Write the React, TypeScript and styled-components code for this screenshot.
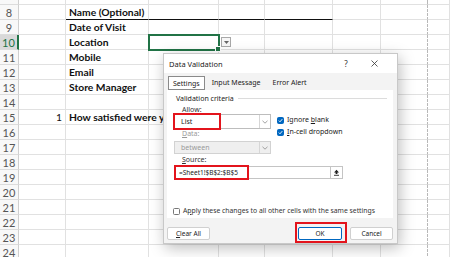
import React from 'react'
import styled, { createGlobalStyle } from 'styled-components'

const GlobalStyle = createGlobalStyle`
    body {
        margin: 0;
        background: #fff;
        overflow: hidden;
    }
`

const COLS = '19px 47px 83px 70px 46px 68px 48px 47px 1fr'

const SheetStyle = styled.div`
    position: relative;
    width: 450px;
    height: 257px;
    overflow: hidden;
    font-family: Lato, "Liberation Sans", sans-serif;
`

const RowStyle = styled.div<{ $h: number }>`
    display: grid;
    grid-template-columns: ${COLS};
    height: ${p => p.$h}px;
`

const HeadCell = styled.div<{ $active?: boolean }>`
    box-sizing: border-box;
    display: flex;
    align-items: center;
    justify-content: center;
    background: ${p => (p.$active ? '#d9d9d9' : '#f8f8f8')};
    color: ${p => (p.$active ? '#217346' : '#555')};
    border-right: ${p => (p.$active ? '2px solid #217346' : '1px solid #cfcfcf')};
    border-bottom: 1px solid #dcdcdc;
    font-size: 11px;
`

const Cell = styled.div<{ $under?: boolean; $dashed?: boolean; $right?: boolean }>`
    position: relative;
    box-sizing: border-box;
    display: flex;
    align-items: center;
    justify-content: ${p => (p.$right ? 'flex-end' : 'flex-start')};
    padding: 0 3px;
    border-right: 1px ${p => (p.$dashed ? 'dashed #b8b8b8' : 'solid #e1e1e1')};
    border-bottom: ${p => (p.$under ? '1.5px solid #111' : '1px solid #e1e1e1')};
    font-size: 10.3px;
    font-weight: bold;
    color: #111;
    white-space: nowrap;
`

const PlainCell = styled(Cell)`
    font-weight: normal;
`

const SelectedCell = styled(Cell)`
    outline: 2px solid #217346;
    outline-offset: -1px;
    z-index: 1;
    &::after {
        content: "";
        position: absolute;
        right: -3px;
        bottom: -3px;
        width: 4px;
        height: 4px;
        background: #217346;
        border: 1px solid #fff;
    }
`

const CellDrop = styled.span`
    box-sizing: border-box;
    width: 10px;
    height: 10px;
    margin-left: -1px;
    border: 1px solid #a8a8a8;
    background: #f6f6f6;
    display: flex;
    align-items: center;
    justify-content: center;
`

/* dialog */

const DialogStyle = styled.div`
    position: absolute;
    left: 163px;
    top: 53px;
    width: 235px;
    height: 191px;
    box-sizing: border-box;
    display: flex;
    flex-direction: column;
    background: #f3f3f3;
    border: 1px solid #c8c8c8;
    box-shadow: 2px 4px 14px rgba(0, 0, 0, 0.26);
    font-family: "Noto Sans", "Open Sans", sans-serif;
    font-size: 7px;
    color: #1a1a1a;
    z-index: 5;
`

const TitleBar = styled.div`
    display: flex;
    align-items: center;
    height: 19px;
    padding: 0 9px 0 5px;
    background: #fff;
    font-size: 7.5px;
`

const TitleText = styled.span`
    flex: 1;
`

const TitleBtn = styled.span`
    width: 28px;
    text-align: center;
    font-size: 8px;
    color: #333;
`

const TabRow = styled.div`
    display: flex;
    align-items: flex-end;
    gap: 2px;
    height: 17px;
    padding: 0 4px;
`

const Tab = styled.span<{ $active?: boolean }>`
    padding: 2px 4px 1px;
    margin-bottom: ${p => (p.$active ? '0' : '1px')};
    line-height: 9px;
    border: 1px solid ${p => (p.$active ? '#8a8a8a' : 'transparent')};
    background: ${p => (p.$active ? '#fff' : 'transparent')};
    font-size: 7px;
`

const Panel = styled.div`
    display: flex;
    flex-direction: column;
    height: 128px;
    margin: 0 4px 0 3px;
    padding: 4px 6px 0 6px;
    background: #fff;
    box-sizing: border-box;
`

const Group = styled.div`
    display: flex;
    align-items: center;
    gap: 4px;
    padding-left: 3px;
    line-height: 9px;
    color: #222;
    &::after {
        content: "";
        flex: 1;
        height: 1px;
        background: #dcdcdc;
    }
`

const FieldLabel = styled.div<{ $disabled?: boolean; $gap: number }>`
    margin: ${p => p.$gap}px 0 0 9px;
    line-height: 8px;
    color: ${p => (p.$disabled ? '#9a9a9a' : '#333')};
`

const U = styled.span`
    text-decoration: underline;
`

const AllowRow = styled.div`
    display: flex;
    align-items: flex-start;
    gap: 6px;
    height: 15px;
`

const SelectBox = styled.div<{ $disabled?: boolean; $h: number }>`
    position: relative;
    flex: none;
    box-sizing: border-box;
    width: 97px;
    height: ${p => p.$h}px;
    margin: ${p => (p.$disabled ? '3px' : '0')} 0 0 1px;
    display: flex;
    align-items: center;
    padding-left: 6px;
    border: 1px solid ${p => (p.$disabled ? '#d2d2d2' : '#bdbdbd')};
    background: ${p => (p.$disabled ? '#efefef' : '#fff')};
    color: ${p => (p.$disabled ? '#9a9a9a' : '#222')};
`

const Chevron = styled.span`
    position: absolute;
    right: 0;
    top: 0;
    bottom: 0;
    width: 10px;
    border-left: 1px solid #d6d6d6;
    display: flex;
    align-items: center;
    justify-content: center;
`

const RedMark = styled.span<{ $w: number }>`
    position: absolute;
    left: -2px;
    top: -2px;
    bottom: -2px;
    width: ${p => p.$w}px;
    border: 2.5px solid #e3141c;
    box-sizing: border-box;
`

const CheckList = styled.div`
    display: flex;
    flex-direction: column;
    gap: 4px;
    margin-top: 2px;
`

const CheckRow = styled.label`
    display: flex;
    align-items: center;
    gap: 3px;
    line-height: 8px;
    white-space: nowrap;
`

const Box = styled.span<{ $on?: boolean }>`
    box-sizing: border-box;
    flex: none;
    width: 7px;
    height: 7px;
    border-radius: 1.5px;
    border: 1px solid ${p => (p.$on ? '#0067c0' : '#777')};
    background: ${p => (p.$on ? '#0067c0' : '#fff')};
    display: flex;
    align-items: center;
    justify-content: center;
`

const SourceBox = styled.div`
    position: relative;
    box-sizing: border-box;
    width: 168px;
    height: 13px;
    margin: 2px 0 0 2px;
    display: flex;
    align-items: center;
    padding-left: 3px;
    border: 1px solid #c4c4c4;
    background: #fff;
    color: #222;
    font-size: 6.5px;
`

const CollapseBtn = styled.span`
    position: absolute;
    right: 0;
    top: 0;
    bottom: 0;
    width: 11px;
    border-left: 1px solid #c4c4c4;
    display: flex;
    align-items: center;
    justify-content: center;
`

const ApplyRow = styled(CheckRow)`
    margin: auto 0 3px 0;
    color: #333;
    font-size: 6.8px;
`

const Footer = styled.div`
    display: flex;
    align-items: flex-start;
    flex: 1;
    padding: 9px 4px 0 3px;
`

const Button = styled.span<{ $primary?: boolean }>`
    position: relative;
    box-sizing: border-box;
    width: ${p => (p.$primary ? 44 : 43)}px;
    height: 13px;
    display: flex;
    align-items: center;
    justify-content: center;
    border-radius: 2px;
    border: 1px solid ${p => (p.$primary ? '#0067c0' : '#d0d0d0')};
    background: #fff;
    font-size: 6.5px;
    color: #222;
`

const FooterGap = styled.span<{ $w?: number }>`
    flex: ${p => (p.$w ? `0 0 ${p.$w}px` : '1')};
`

const OkMark = styled.span`
    position: absolute;
    left: -4px;
    right: -6px;
    top: -6px;
    bottom: -4px;
    border: 2.5px solid #e3141c;
`

const ChevronIcon = () => (
    <svg width="6" height="4" viewBox="0 0 6 4">
        <polyline points="0.5,0.8 3,3.2 5.5,0.8" fill="none" stroke="#8a8a8a" strokeWidth="0.8" />
    </svg>
)

const CheckIcon = () => (
    <svg width="5" height="5" viewBox="0 0 5 5">
        <polyline points="0.8,2.6 2,3.8 4.3,1.1" fill="none" stroke="#fff" strokeWidth="0.9" />
    </svg>
)

type RowDef = { n: number; b?: string; a?: string; under?: boolean }

const rows: RowDef[] = [
    { n: 8, b: 'Name (Optional)', under: true },
    { n: 9, b: 'Date of Visit' },
    { n: 10, b: 'Location' },
    { n: 11, b: 'Mobile' },
    { n: 12, b: 'Email' },
    { n: 13, b: 'Store Manager' },
    { n: 14 },
    { n: 15, a: '1', b: 'How satisfied were you with our service?' },
    { n: 16 }, { n: 17 }, { n: 18 }, { n: 19 }, { n: 20 },
    { n: 21 }, { n: 22 }, { n: 23 }, { n: 24 },
]

const SheetRow: React.FC<{ row?: RowDef; h: number }> = ({ row, h }) => {
    const active = row?.n === 10
    return (
        <RowStyle $h={h}>
            <HeadCell $active={active}>{row?.n}</HeadCell>
            <PlainCell $right>{row?.a}</PlainCell>
            <Cell $under={row?.under}>{row?.b}</Cell>
            {active ? <SelectedCell /> : <Cell $under={row?.under} />}
            <Cell $under={row?.under}>
                {active && (
                    <CellDrop>
                        <svg width="5" height="3" viewBox="0 0 5 3">
                            <polygon points="0,0 5,0 2.5,3" fill="#666" />
                        </svg>
                    </CellDrop>
                )}
            </Cell>
            <Cell $under={row?.under} />
            <Cell />
            <Cell $dashed />
            <Cell />
        </RowStyle>
    )
}

const Dialog = () => (
    <DialogStyle>
        <TitleBar>
            <TitleText>Data Validation</TitleText>
            <TitleBtn>?</TitleBtn>
            <TitleBtn>
                <svg width="7" height="7" viewBox="0 0 7 7">
                    <path d="M0.5 0.5L6.5 6.5M6.5 0.5L0.5 6.5" stroke="#333" strokeWidth="0.8" />
                </svg>
            </TitleBtn>
        </TitleBar>
        <TabRow>
            <Tab $active>Settings</Tab>
            <Tab>Input Message</Tab>
            <Tab>Error Alert</Tab>
        </TabRow>
        <Panel>
            <Group>Validation criteria</Group>
            <FieldLabel $gap={3}>
                <U>A</U>llow:
            </FieldLabel>
            <AllowRow>
                <SelectBox $h={15}>
                    List
                    <Chevron><ChevronIcon /></Chevron>
                    <RedMark $w={48} />
                </SelectBox>
                <CheckList>
                    <CheckRow>
                        <Box $on><CheckIcon /></Box>
                        <span>Ignore <U>b</U>lank</span>
                    </CheckRow>
                    <CheckRow>
                        <Box $on><CheckIcon /></Box>
                        <span><U>I</U>n-cell dropdown</span>
                    </CheckRow>
                </CheckList>
            </AllowRow>
            <FieldLabel $disabled $gap={1}>
                <U>D</U>ata:
            </FieldLabel>
            <SelectBox $disabled $h={13}>
                between
                <Chevron><ChevronIcon /></Chevron>
            </SelectBox>
            <FieldLabel $gap={2}>
                <U>S</U>ource:
            </FieldLabel>
            <SourceBox>
                =Sheet1!$B$2:$B$5
                <RedMark $w={75} />
                <CollapseBtn>
                    <svg width="7" height="7" viewBox="0 0 7 7">
                        <path d="M3.5 0.8L1 3.4H2.6V5H4.4V3.4H6Z" fill="#222" />
                        <rect x="1" y="5.8" width="5" height="0.9" fill="#222" />
                    </svg>
                </CollapseBtn>
            </SourceBox>
            <ApplyRow>
                <Box />
                <span>A<U>p</U>ply these changes to all other cells with the same settings</span>
            </ApplyRow>
        </Panel>
        <Footer>
            <Button><U>C</U>lear All</Button>
            <FooterGap />
            <Button $primary>
                OK
                <OkMark />
            </Button>
            <FooterGap $w={8} />
            <Button>Cancel</Button>
        </Footer>
    </DialogStyle>
)

export default function App() {
    return (
        <SheetStyle>
            <GlobalStyle />
            <SheetRow h={5} />
            {rows.map(r => (
                <SheetRow key={r.n} row={r} h={15} />
            ))}
            <Dialog />
        </SheetStyle>
    )
}
